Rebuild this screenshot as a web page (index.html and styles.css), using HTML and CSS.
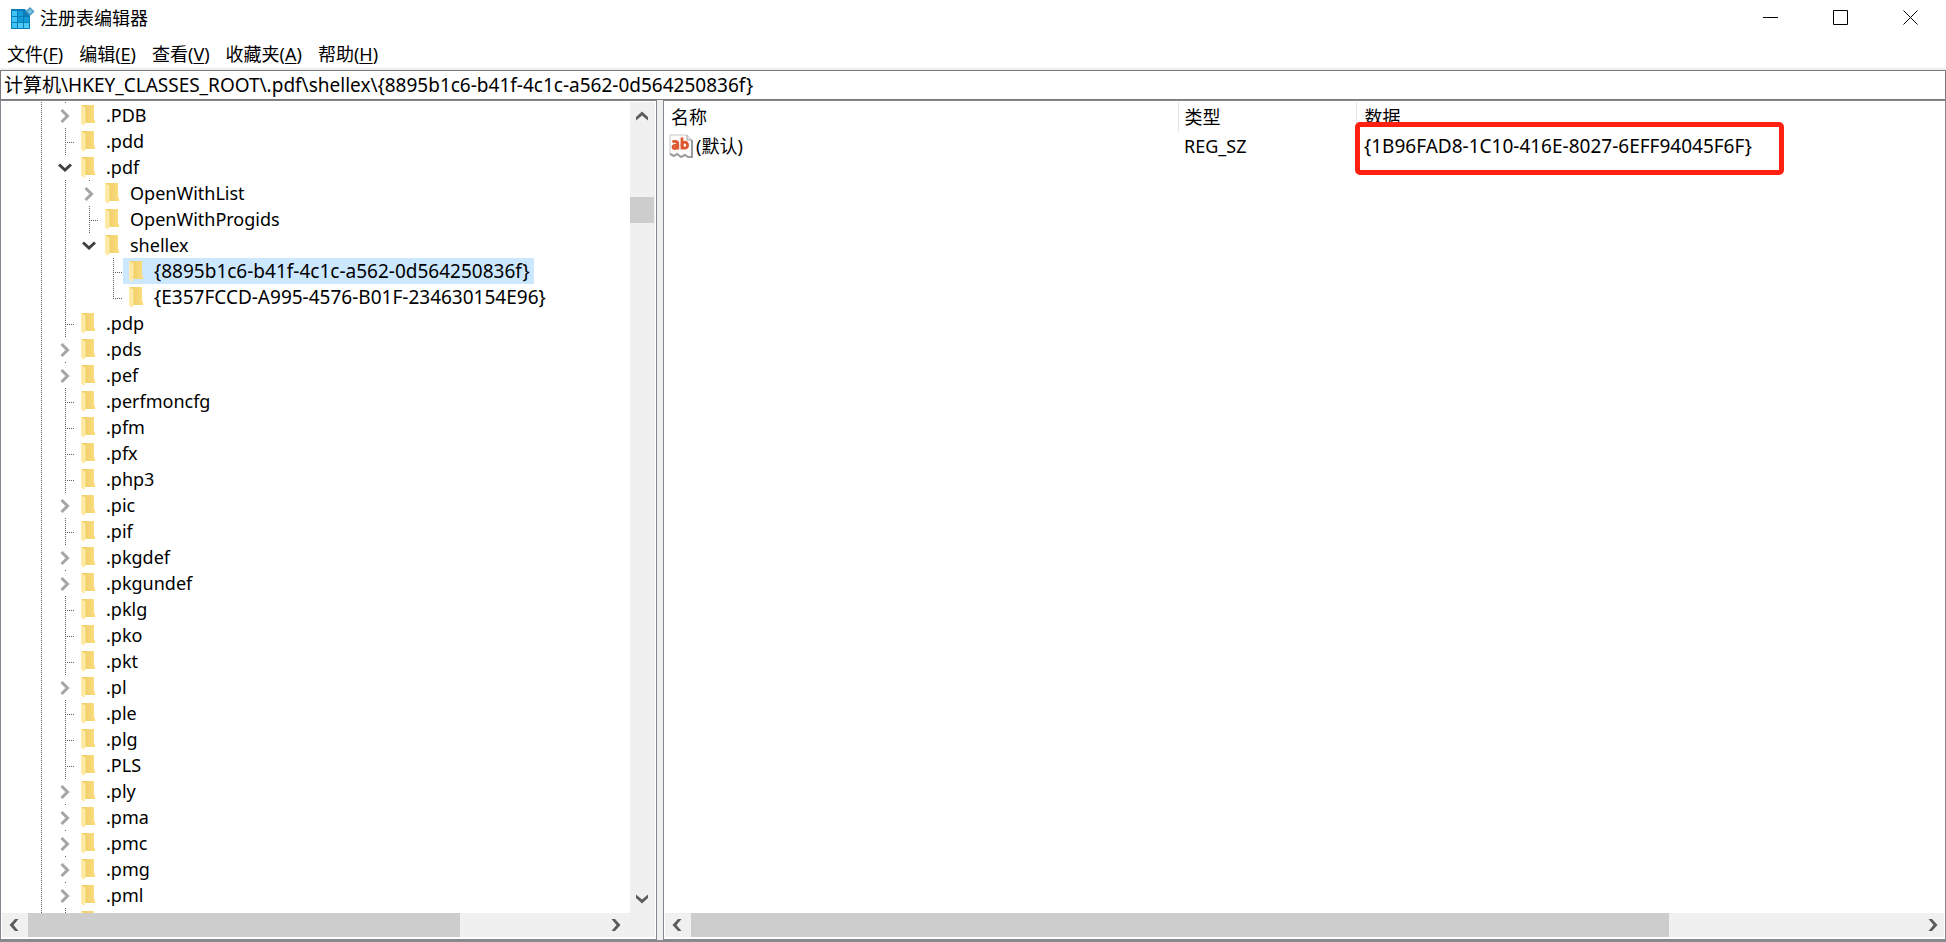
FILE: index.html
```html
<!DOCTYPE html>
<html lang="zh-CN">
<head>
<meta charset="utf-8">
<title>注册表编辑器</title>
<link rel="stylesheet" href="styles.css">
</head>
<body>
<svg class="defs" aria-hidden="true">
  <defs>
    <linearGradient id="gold" x1="0" x2="1" y1="0" y2="0"><stop offset="0" stop-color="#eecb62"/><stop offset="1" stop-color="#fbdd80"/></linearGradient>
    <symbol id="folder" viewBox="0 0 14 21"><path d="M1 0H13V14L14 15V18H4Z" fill="url(#gold)"/><path d="M0 0L4.500 2.500V16.500L3.500 21L0 18.500Z" fill="#ffe9a6"/></symbol>
    <symbol id="closed" viewBox="0 0 10 14"><path d="M1.500 1L7.500 7L1.500 13" fill="none" stroke="#a6a6a6" stroke-width="3"/></symbol>
    <symbol id="opened" viewBox="0 0 14 10"><path d="M1 1.500L7 7L13 1.500" fill="none" stroke="#404040" stroke-width="3"/></symbol>
    <symbol id="arrow" viewBox="0 0 12 12"><path d="M0 9.500V6L6 0.500L12 6V9.500L6 4.500Z" fill="#5c5c5c"/></symbol>
  </defs>
</svg>
<div class="window">
  <header class="titlebar">
    <svg class="app-icon" viewBox="0 0 24 22" aria-hidden="true">
      <path d="M0 2H14L19 8V22H0Z" fill="#0b7db8"/>
      <path d="M1 4h5v5H1zM1 10h5v5H1zM1 16h5v5H1z" fill="#3fc4f8"/>
      <path d="M7 4h5v5H7zM7 10h5v5H7zM13 10h5v5h-5z" fill="#129bd6"/>
      <path d="M7 16h5v5H7zM13 16h5v5h-5z" fill="#4fc9f7"/>
      <path d="M19 0L23.500 4.500L19 9L14.500 4.500Z" fill="#4a9cc6"/>
      <path d="M19 2L21.500 4.500L19 7L16.500 4.500Z" fill="#7ac2e2"/>
    </svg>
    <h1 class="title">注册表编辑器</h1>
    <button class="caption" aria-label="最小化"><svg viewBox="0 0 16 16"><path d="M0 7.500H15" /></svg></button>
    <button class="caption" aria-label="最大化"><svg viewBox="0 0 16 16"><path d="M.5.5H14.500V14.500H.5Z" /></svg></button>
    <button class="caption" aria-label="关闭"><svg viewBox="0 0 16 16"><path d="M.5.5L14.500 14.500M14.500.5L.5 14.500" /></svg></button>
  </header>
  <nav class="menubar">
    <button>文件(<u>F</u>)</button>
    <button>编辑(<u>E</u>)</button>
    <button>查看(<u>V</u>)</button>
    <button>收藏夹(<u>A</u>)</button>
    <button>帮助(<u>H</u>)</button>
  </nav>
  <input class="address" type="text" aria-label="地址" value="计算机\HKEY_CLASSES_ROOT\.pdf\shellex\{8895b1c6-b41f-4c1c-a562-0d564250836f}">
  <main class="panes">
    <section class="pane tree-pane">
      <div class="tree-view">
        <ul class="tree">
          <li><i class="line"></i><button class="toggle" aria-label="展开"><svg class="closed"><use href="#closed"/></svg></button><span class="item"><svg class="folder"><use href="#folder"/></svg>.PDB</span></li>
          <li><i class="line"></i><i class="line branch"></i><span class="item"><svg class="folder"><use href="#folder"/></svg>.pdd</span></li>
          <li><i class="line"></i><button class="toggle" aria-label="折叠"><svg class="opened"><use href="#opened"/></svg></button><span class="item"><svg class="folder"><use href="#folder"/></svg>.pdf</span></li>
          <li><i class="line"></i><i class="line"></i><button class="toggle" aria-label="展开"><svg class="closed"><use href="#closed"/></svg></button><span class="item"><svg class="folder"><use href="#folder"/></svg>OpenWithList</span></li>
          <li><i class="line"></i><i class="line"></i><i class="line branch"></i><span class="item"><svg class="folder"><use href="#folder"/></svg>OpenWithProgids</span></li>
          <li><i class="line"></i><i class="line"></i><button class="toggle" aria-label="折叠"><svg class="opened"><use href="#opened"/></svg></button><span class="item"><svg class="folder"><use href="#folder"/></svg>shellex</span></li>
          <li><i class="line"></i><i class="line"></i><i class="blank"></i><i class="line branch"></i><span class="item guid selected"><svg class="folder"><use href="#folder"/></svg>{8895b1c6-b41f-4c1c-a562-0d564250836f}</span></li>
          <li><i class="line"></i><i class="line"></i><i class="blank"></i><i class="line branch last"></i><span class="item guid"><svg class="folder"><use href="#folder"/></svg>{E357FCCD-A995-4576-B01F-234630154E96}</span></li>
          <li><i class="line"></i><i class="line branch"></i><span class="item"><svg class="folder"><use href="#folder"/></svg>.pdp</span></li>
          <li><i class="line"></i><button class="toggle" aria-label="展开"><svg class="closed"><use href="#closed"/></svg></button><span class="item"><svg class="folder"><use href="#folder"/></svg>.pds</span></li>
          <li><i class="line"></i><button class="toggle" aria-label="展开"><svg class="closed"><use href="#closed"/></svg></button><span class="item"><svg class="folder"><use href="#folder"/></svg>.pef</span></li>
          <li><i class="line"></i><i class="line branch"></i><span class="item"><svg class="folder"><use href="#folder"/></svg>.perfmoncfg</span></li>
          <li><i class="line"></i><i class="line branch"></i><span class="item"><svg class="folder"><use href="#folder"/></svg>.pfm</span></li>
          <li><i class="line"></i><i class="line branch"></i><span class="item"><svg class="folder"><use href="#folder"/></svg>.pfx</span></li>
          <li><i class="line"></i><i class="line branch"></i><span class="item"><svg class="folder"><use href="#folder"/></svg>.php3</span></li>
          <li><i class="line"></i><button class="toggle" aria-label="展开"><svg class="closed"><use href="#closed"/></svg></button><span class="item"><svg class="folder"><use href="#folder"/></svg>.pic</span></li>
          <li><i class="line"></i><i class="line branch"></i><span class="item"><svg class="folder"><use href="#folder"/></svg>.pif</span></li>
          <li><i class="line"></i><button class="toggle" aria-label="展开"><svg class="closed"><use href="#closed"/></svg></button><span class="item"><svg class="folder"><use href="#folder"/></svg>.pkgdef</span></li>
          <li><i class="line"></i><button class="toggle" aria-label="展开"><svg class="closed"><use href="#closed"/></svg></button><span class="item"><svg class="folder"><use href="#folder"/></svg>.pkgundef</span></li>
          <li><i class="line"></i><i class="line branch"></i><span class="item"><svg class="folder"><use href="#folder"/></svg>.pklg</span></li>
          <li><i class="line"></i><i class="line branch"></i><span class="item"><svg class="folder"><use href="#folder"/></svg>.pko</span></li>
          <li><i class="line"></i><i class="line branch"></i><span class="item"><svg class="folder"><use href="#folder"/></svg>.pkt</span></li>
          <li><i class="line"></i><button class="toggle" aria-label="展开"><svg class="closed"><use href="#closed"/></svg></button><span class="item"><svg class="folder"><use href="#folder"/></svg>.pl</span></li>
          <li><i class="line"></i><i class="line branch"></i><span class="item"><svg class="folder"><use href="#folder"/></svg>.ple</span></li>
          <li><i class="line"></i><i class="line branch"></i><span class="item"><svg class="folder"><use href="#folder"/></svg>.plg</span></li>
          <li><i class="line"></i><i class="line branch"></i><span class="item"><svg class="folder"><use href="#folder"/></svg>.PLS</span></li>
          <li><i class="line"></i><button class="toggle" aria-label="展开"><svg class="closed"><use href="#closed"/></svg></button><span class="item"><svg class="folder"><use href="#folder"/></svg>.ply</span></li>
          <li><i class="line"></i><button class="toggle" aria-label="展开"><svg class="closed"><use href="#closed"/></svg></button><span class="item"><svg class="folder"><use href="#folder"/></svg>.pma</span></li>
          <li><i class="line"></i><button class="toggle" aria-label="展开"><svg class="closed"><use href="#closed"/></svg></button><span class="item"><svg class="folder"><use href="#folder"/></svg>.pmc</span></li>
          <li><i class="line"></i><button class="toggle" aria-label="展开"><svg class="closed"><use href="#closed"/></svg></button><span class="item"><svg class="folder"><use href="#folder"/></svg>.pmg</span></li>
          <li><i class="line"></i><button class="toggle" aria-label="展开"><svg class="closed"><use href="#closed"/></svg></button><span class="item"><svg class="folder"><use href="#folder"/></svg>.pml</span></li>
          <li><i class="line"></i><i class="line branch"></i><span class="item"><svg class="folder"><use href="#folder"/></svg></span></li>
        </ul>
        <div class="scroll vertical">
          <button aria-label="向上滚动"><svg><use href="#arrow"/></svg></button>
          <div class="track"><div class="thumb tree-y"></div></div>
          <button class="down" aria-label="向下滚动"><svg><use href="#arrow"/></svg></button>
        </div>
      </div>
      <div class="scroll horizontal cornered">
        <button class="left" aria-label="向左滚动"><svg><use href="#arrow"/></svg></button>
        <div class="track"><div class="thumb tree-x"></div></div>
        <button class="right" aria-label="向右滚动"><svg><use href="#arrow"/></svg></button>
      </div>
    </section>
    <section class="pane list-pane">
      <div class="list-view">
        <table class="values">
          <colgroup><col class="col-name"><col class="col-type"><col></colgroup>
          <thead><tr><th>名称</th><th>类型</th><th>数据</th></tr></thead>
          <tbody><tr>
            <td><div class="name">
              <svg class="ab" viewBox="0 0 24 24" aria-hidden="true">
                <path d="M1 1H18L23 6V23H19L16 21L12 23L8 20L5 22L1 20Z" fill="#fbfbfb" stroke="#c9c9c9"/>
                <path d="M23 6V23H19L16 21L12 23L8 20L5 22L1 20" fill="none" stroke="#9c9c9c" stroke-width="2"/>
                <path d="M18 1V6H23" fill="#e6e6e6" stroke="#a5a5a5"/>
                <g fill="none" stroke="#de5831" stroke-width="2.800"><path d="M3.500 8.200C5 7 8.800 6.800 8.800 10V15.500M9 11C6 11 4 11.300 4 13.100C4 15.500 8 14.800 8.800 12.500"/><path d="M13 3.500V15.500"/><ellipse cx="15.800" cy="11.200" rx="2.800" ry="3"/></g>
              </svg>(默认)</div></td>
            <td>REG_SZ</td>
            <td><div class="data guid">{1B96FAD8-1C10-416E-8027-6EFF94045F6F}<span class="marker"></span></div></td>
          </tr></tbody>
        </table>
      </div>
      <div class="scroll horizontal">
        <button class="left" aria-label="向左滚动"><svg><use href="#arrow"/></svg></button>
        <div class="track"><div class="thumb list-x"></div></div>
        <button class="right" aria-label="向右滚动"><svg><use href="#arrow"/></svg></button>
      </div>
    </section>
  </main>
</div>
</body>
</html>
```
FILE: styles.css
```css
* { box-sizing: border-box; }

body {
  margin: 0;
  color: #000;
  background: #fff;
  font: 18px/26px "Noto Sans", "Noto Sans CJK SC", sans-serif;
}

button {
  display: flex;
  align-items: center;
  justify-content: center;
  padding: 0;
  border: 0;
  background: none;
  color: inherit;
  font: inherit;
}

.defs { position: absolute; width: 0; height: 0; }

.window {
  display: flex;
  flex-direction: column;
  height: 100vh;
  border-bottom: 2px solid #8a8a8c;
}

.titlebar {
  display: flex;
  align-items: center;
  height: 40px;
  padding: 0 0 4px 11px;
}
.app-icon { width: 24px; height: 22px; }
.title { flex: 1; margin: 0 0 0 5px; font-size: 18px; font-weight: 400; }
.caption { width: 70px; height: 36px; }
.caption svg { width: 16px; height: 16px; fill: none; stroke: #000; }

.menubar {
  display: flex;
  gap: 16px;
  height: 30px;
  padding-left: 7px;
  border-bottom: 2px solid #f0f0f0;
}
.menubar u { text-underline-offset: 2px; text-decoration-thickness: 1px; }

.address {
  width: 100%;
  height: 30px;
  padding: 0 3px 2px;
  border: 1px solid #7a7a7a;
  color: inherit;
  font: inherit;
  font-size: 19px;
}
.guid { font-size: 19px; }

.panes { display: flex; flex: 1; gap: 6px; min-height: 0; background: #f0f0f0; }
.pane {
  display: flex;
  flex-direction: column;
  min-width: 0;
  padding: 1px 1px 2px;
  border: 1px solid #828790;
  background: #fff;
}
.tree-pane { width: 657px; }
.list-pane { flex: 1; }

.tree-view { display: flex; flex: 1; min-height: 0; }
.tree { flex: 1; margin: 0; padding: 0 0 0 25px; overflow: hidden; list-style: none; }
.tree li { display: flex; height: 26px; }

.line, .blank, .toggle { width: 24px; height: 26px; flex: none; }
.line {
  background: repeating-linear-gradient(#606060 0 1px, transparent 1px 2px) 14px 0 / 1px 100% no-repeat;
}
.branch {
  background:
    repeating-linear-gradient(#606060 0 1px, transparent 1px 2px) 14px 0 / 1px 100% no-repeat,
    repeating-linear-gradient(90deg, #606060 0 1px, transparent 1px 2px) 14px 14px / 11px 1px no-repeat;
}
.last { background-size: 1px 15px, 11px 1px; }
.toggle { padding: 2px 0 0 4px; background: linear-gradient(#606060, #606060) 14px 0 / 1px 1px no-repeat; }
.closed { width: 10px; height: 14px; }
.opened { width: 14px; height: 10px; }

.item { display: flex; gap: 11px; padding: 0 4px 0 6px; white-space: nowrap; }
.folder { width: 14px; height: 21px; margin-top: 3px; }
.selected { background: #cce8ff; }

.scroll { display: flex; flex: none; background: #f0f0f0; }
.scroll button { flex: none; width: 24px; height: 24px; }
.scroll svg { width: 12px; height: 12px; }
.track { flex: 1; }
.thumb { background: #cdcdcd; }
.vertical { flex-direction: column; width: 25px; padding: 3px 0; }
.horizontal { height: 24px; padding-left: 1px; }
.horizontal .thumb { height: 100%; }
.cornered { padding-right: 28px; }
.down svg { transform: rotate(180deg); }
.left svg { transform: rotate(-90deg); }
.right svg { transform: rotate(90deg); }
.tree-y { width: 24px; height: 26px; margin-top: 68px; }
.tree-x { width: 75%; margin-left: 1px; }
.list-x { width: 79.500%; margin-left: 1px; }

.list-view { flex: 1; min-height: 0; }
.values { width: 100%; table-layout: fixed; border-collapse: collapse; }
.col-name { width: 513px; }
.col-type { width: 178px; }
.values th {
  height: 30px;
  padding: 1px 6px;
  border-right: 1px solid #e5e5e5;
  font-weight: 400;
  text-align: left;
}
.values th:last-child { border-right: 0; }
.values td { height: 28px; padding: 0 6px; }
.values th:last-child, .values td:last-child { padding-left: 8px; }
.name { display: flex; align-items: center; gap: 3px; margin-left: -2px; }
.ab { width: 24px; height: 24px; }
.data { position: relative; width: max-content; padding-right: 32px; }
.marker {
  position: absolute;
  inset: -11px 0 -16px -9px;
  border: 5px solid #ff2012;
  border-radius: 5px;
}
```
